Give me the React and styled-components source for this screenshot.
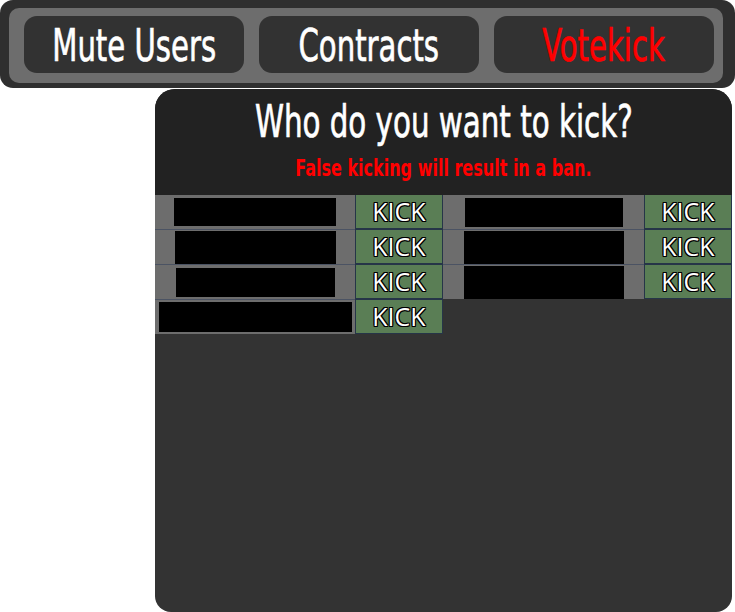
import React from "react";
import styled, { createGlobalStyle } from "styled-components";

const Global = createGlobalStyle`
  html, body { margin: 0; padding: 0; background: #ffffff; }
  body { font-family: "Liberation Sans Narrow", "DejaVu Sans Condensed", "Liberation Sans", sans-serif; }
`;

const Page = styled.div`
  width: 735px;
  height: 612px;
  display: flex;
  flex-direction: column;
  overflow: hidden;
`;

const TabBarOuter = styled.div`
  background: #2f2f2f;
  border-radius: 13px;
  padding: 8px 12px 5px 9px;
  height: 88px;
  box-sizing: border-box;
  width: 735px;
`;

const TabBarInner = styled.div`
  background: #6d6d6d;
  border-radius: 10px;
  height: 75px;
  box-sizing: border-box;
  padding: 8px 9px 10px 15px;
  display: flex;
  gap: 15px;
`;

const Tab = styled.button`
  flex: 1;
  border: none;
  border-radius: 13px;
  background: #323232;
  color: ${(p) => (p.$active ? "#ff0000" : "#ffffff")};
  font-family: "Liberation Sans Narrow", "DejaVu Sans Condensed", sans-serif;
  font-stretch: condensed;
  font-size: 40px;
  line-height: 1;
  padding: 0;
  cursor: pointer;
  display: flex;
  align-items: center;
  justify-content: center;
  -webkit-text-stroke: 0.6px currentColor;
`;

const TabLabel = styled.span`
  display: inline-block;
  transform: scale(0.81, 1.12);
`;

const Panel = styled.section`
  margin-top: 1px;
  margin-left: 155px;
  width: 577px;
  flex: 1;
  background: #333333;
  border-radius: 20px 20px 16px 16px;
  overflow: hidden;
  display: flex;
  flex-direction: column;
`;

const Header = styled.header`
  background: #222222;
  height: 106px;
  box-sizing: border-box;
  padding-top: 10px;
  display: flex;
  flex-direction: column;
  align-items: center;
`;

const Title = styled.h1`
  margin: 0;
  color: #ffffff;
  font-family: "Liberation Sans Narrow", "DejaVu Sans Condensed", sans-serif;
  font-stretch: condensed;
  font-weight: normal;
  font-size: 40px;
  line-height: 44px;
  transform: scale(0.815, 1.12);
  -webkit-text-stroke: 0.6px currentColor;
`;

const Warning = styled.p`
  margin: 14px 0 0;
  color: #ff0000;
  font-family: "Liberation Sans Narrow", "DejaVu Sans Condensed", sans-serif;
  font-stretch: condensed;
  font-weight: bold;
  font-size: 20px;
  line-height: 22px;
  transform: scale(0.89, 1.12);
`;

const Grid = styled.div`
  display: grid;
  grid-template-columns: 200px 88px 201px 88px;
`;

const NameCell = styled.div`
  background: #6d6d6d;
  height: 34px;
  border-top: ${(p) => (p.$first ? "none" : "1px solid #4b5363")};
  display: flex;
  align-items: center;
  justify-content: ${(p) => (p.$wide ? "flex-start" : "center")};
  padding-left: ${(p) => (p.$wide ? "4px" : "0")};
  box-sizing: content-box;
`;

const Redacted = styled.span`
  display: block;
  background: #000000;
`;

const KickButton = styled.button`
  height: ${(p) => (p.$first ? "34px" : "35px")};
  box-sizing: border-box;
  background: #5a7e55;
  border: 1px solid #263548;
  border-top: ${(p) => (p.$first ? "none" : "1px solid #263548")};
  margin: 0;
  padding: 0;
  color: #ffffff;
  font-family: "Open Sans", "Noto Sans", sans-serif;
  font-size: 25px;
  line-height: 1;
  cursor: pointer;
  text-shadow:
    -1px -1px 0 #000, 1px -1px 0 #000, -1px 1px 0 #000, 1px 1px 0 #000,
    0 -1px 0 #000, 0 1px 0 #000, -1px 0 0 #000, 1px 0 0 #000;
`;

const Empty = styled.div``;

const rows = [
  [{ w: 162, h: 28 }, { w: 158, h: 29 }],
  [{ w: 161, h: 33 }, { w: 160, h: 33 }],
  [{ w: 159, h: 29 }, { w: 160, h: 33 }],
  [{ w: 193, h: 30, wide: true }, null],
];

export default function App() {
  return (
    <Page>
      <Global />
      <TabBarOuter>
        <TabBarInner>
          <Tab><TabLabel>Mute Users</TabLabel></Tab>
          <Tab><TabLabel>Contracts</TabLabel></Tab>
          <Tab $active><TabLabel>Votekick</TabLabel></Tab>
        </TabBarInner>
      </TabBarOuter>
      <Panel>
        <Header>
          <Title>Who do you want to kick?</Title>
          <Warning>False kicking will result in a ban.</Warning>
        </Header>
        <Grid>
          {rows.map((row, i) =>
            row.map((cell, j) =>
              cell ? (
                <React.Fragment key={`${i}-${j}`}>
                  <NameCell $first={i === 0} $wide={cell.wide}>
                    <Redacted style={{ width: cell.w, height: cell.h }} />
                  </NameCell>
                  <KickButton $first={i === 0}>KICK</KickButton>
                </React.Fragment>
              ) : (
                <React.Fragment key={`${i}-${j}`}>
                  <Empty />
                  <Empty />
                </React.Fragment>
              )
            )
          )}
        </Grid>
      </Panel>
    </Page>
  );
}
